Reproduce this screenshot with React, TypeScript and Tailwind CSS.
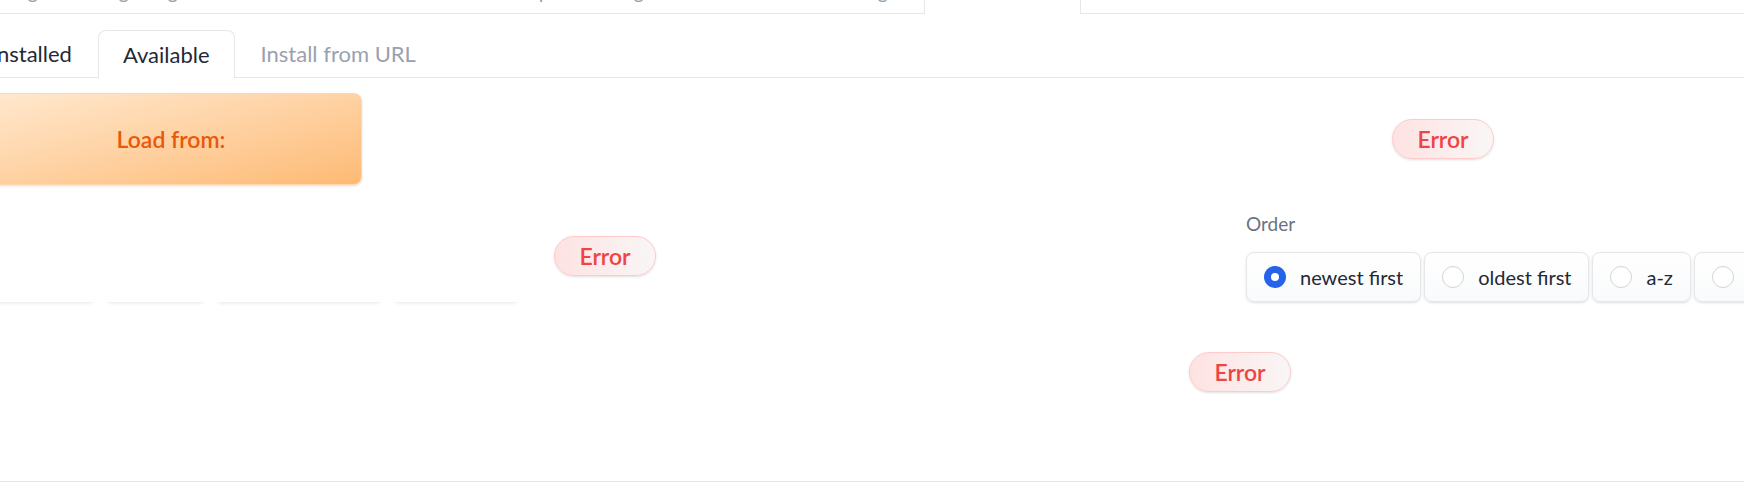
import React from "react";

const tabs = ["Installed", "Available", "Install from URL"];
const tagWidths = [116, 101, 168, 128];
const orders = ["newest first", "oldest first", "a-z", "z-a", "internal order", "update time", "create time", "stars"];

function ErrorCover() {
  return (
    <div className="absolute inset-0 z-10 flex items-center justify-center bg-white/90">
      <span className="flex h-[40px] items-center rounded-full border border-[#fecaca] bg-linear-to-r from-[#fee2e2] to-[#f9f6f6] px-[24px] text-[23px] font-semibold text-[#ef4444] shadow-sm">
        Error
      </span>
    </div>
  );
}

export default function App() {
  return (
    <div className="h-[487px] w-[1744px] overflow-hidden bg-white font-['Lato','Noto_Sans',sans-serif] text-[#1f2937]">
      {/* cut-off top boxes */}
      <div className="flex h-[14px]">
        <div className="w-[925px] shrink-0 overflow-hidden border-r border-b border-gray-200">
          <div className="-mt-[23px] flex whitespace-nowrap text-[20px] leading-[28px] text-gray-400">
            <span className="flex w-[38px] shrink-0 justify-end">Loading</span>
            <span className="flex w-[91px] shrink-0 justify-end">listing</span>
            <span className="flex w-[49px] shrink-0 justify-end">tag</span>
            <span className="flex w-[372px] shrink-0 justify-end">stored in index for the lookup</span>
            <span className="flex w-[94px] shrink-0 justify-end">string</span>
            <span className="flex w-[244px] shrink-0 justify-end">used as the default config</span>
          </div>
        </div>
        <div className="w-[155px] shrink-0" />
        <div className="flex-1 border-l border-b border-gray-200" />
      </div>

      {/* tabs */}
      <div className="mt-[16px] flex h-[48px] border-b border-gray-200">
        <div className="-ml-[33px] flex gap-[2px]">
          {tabs.map((t) => (
            <button
              key={t}
              className={
                t === "Available"
                  ? "-mb-px h-[48px] rounded-t-lg border border-b-0 border-gray-200 bg-white px-[24px] text-[22px] text-[#1f2937]"
                  : t === "Installed"
                  ? "h-[47px] px-[24px] text-[22px] text-[#1f2937]"
                  : "h-[47px] px-[24px] text-[22px] text-gray-400"
              }
            >
              {t}
            </button>
          ))}
        </div>
      </div>

      <div className="-ml-[20px] mt-[15px] flex flex-col">
        {/* load from row */}
        <div className="flex h-[92px] gap-[26px]">
          <button className="w-[382px] shrink-0 rounded-lg border border-[#fed7aa] bg-linear-to-br from-[#ffe9cf] to-[#fdba74] text-[23px] font-semibold text-[#ea580c] shadow-sm">
            Load from:
          </button>
          <div className="relative w-[2110px] shrink-0 rounded-lg bg-white">
            <ErrorCover />
          </div>
        </div>

        {/* tags + order row */}
        <div className="mt-[25px] flex gap-[16px]">
          <div className="relative flex h-[92px] w-[1250px] shrink-0 flex-col justify-end">
            <div className="flex gap-[9px]">
              {tagWidths.map((w, i) => (
                <div
                  key={i}
                  style={{ width: w }}
                  className="h-[44px] shrink-0 rounded-lg bg-white shadow-[0_2px_3px_rgba(0,0,0,0.07)]"
                />
              ))}
            </div>
            <ErrorCover />
          </div>

          <div className="flex shrink-0 flex-col">
            <span className="text-[19px] leading-[28px] text-gray-500">Order</span>
            <div className="mt-[14px] flex gap-[3px]">
              {orders.map((o, i) => (
                <label
                  key={o}
                  className="flex h-[50px] shrink-0 items-center gap-[14px] rounded-lg border border-gray-200 bg-linear-to-b from-white to-gray-50 px-[17px] text-[20px] text-[#1f2937] shadow-sm"
                >
                  {i === 0 ? (
                    <span className="flex h-[22px] w-[22px] items-center justify-center rounded-full bg-[#2563eb]">
                      <span className="h-[8px] w-[8px] rounded-full bg-white" />
                    </span>
                  ) : (
                    <span className="h-[22px] w-[22px] rounded-full border border-gray-300 bg-white" />
                  )}
                  {o}
                </label>
              ))}
            </div>
          </div>
        </div>

        {/* extension list */}
        <div className="relative mt-[16px] h-[108px] w-[2520px] shrink-0">
          <ErrorCover />
        </div>
      </div>

      <div className="mt-[55px] border-t border-gray-200" />
    </div>
  );
}
